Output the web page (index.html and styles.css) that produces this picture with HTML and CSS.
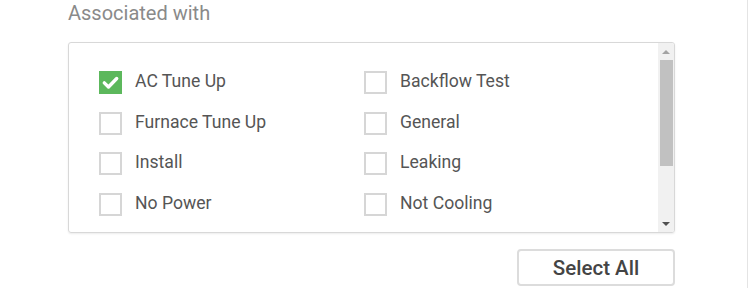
FILE: index.html
```html
<!DOCTYPE html>
<html>
<head>
<meta charset="utf-8">
<link rel="stylesheet" href="styles.css">
</head>
<body>
<div class="page">
  <div class="panel">
    <div class="label">Associated with</div>
    <div class="box">
      <div class="list">
        <label class="item"><span class="cb checked"><svg viewBox="0 0 23 23" width="23" height="23"><path d="M5.3 11.9 L9.5 16 L17.7 7.5" fill="none" stroke="#fff" stroke-width="3.4" stroke-linecap="round" stroke-linejoin="round"/></svg></span><span class="txt">AC Tune Up</span></label>
        <label class="item"><span class="cb"></span><span class="txt">Backflow Test</span></label>
        <label class="item"><span class="cb"></span><span class="txt">Furnace Tune Up</span></label>
        <label class="item"><span class="cb"></span><span class="txt">General</span></label>
        <label class="item"><span class="cb"></span><span class="txt">Install</span></label>
        <label class="item"><span class="cb"></span><span class="txt">Leaking</span></label>
        <label class="item"><span class="cb"></span><span class="txt">No Power</span></label>
        <label class="item"><span class="cb"></span><span class="txt">Not Cooling</span></label>
      </div>
      <div class="scrollbar">
        <div class="arrow up"></div>
        <div class="thumb"></div>
        <div class="track"></div>
        <div class="arrow down"></div>
      </div>
    </div>
    <div class="actions">
      <button class="btn">Select All</button>
    </div>
  </div>
</div>
</body>
</html>
```
FILE: styles.css
```css
html, body {
  margin: 0;
  padding: 0;
  background: #fff;
}
body {
  font-family: Roboto, "Liberation Sans", sans-serif;
}
.page {
  width: 747px;
  height: 288px;
  border-right: 1px solid #e4e4e4;
  overflow: hidden;
}
.panel {
  width: 607px;
  padding: 2px 0 0 68px;
}
.label {
  font-size: 20px;
  line-height: 22px;
  color: #8a8a8a;
  margin-bottom: 18px;
}
.box {
  box-sizing: border-box;
  height: 191px;
  border: 1px solid #d8d8d8;
  border-radius: 3px;
  box-shadow: 0 1px 2px rgba(0,0,0,0.08);
  display: flex;
  overflow: hidden;
}
.list {
  flex: 1;
  padding: 28px 0 0 30px;
  display: grid;
  grid-template-columns: 265px 265px;
  grid-auto-rows: 40.67px;
  align-content: start;
  overflow: hidden;
}
.item {
  display: flex;
  align-items: flex-start;
}
.cb {
  box-sizing: border-box;
  width: 23px;
  height: 23px;
  border: 2px solid #d6d6d6;
  background: #fff;
  flex: none;
  display: block;
}
.cb.checked {
  border: none;
  background: #5cb85c;
}
.cb svg {
  display: block;
}
.txt {
  margin-left: 13px;
  font-size: 17.6px;
  line-height: 20px;
  color: #555;
}
.scrollbar {
  width: 16px;
  flex: none;
  background: #f1f1f1;
  display: flex;
  flex-direction: column;
}
.arrow {
  height: 17px;
  flex: none;
  display: flex;
  align-items: center;
  justify-content: center;
}
.arrow::before {
  content: "";
  width: 0;
  height: 0;
  border-left: 4px solid transparent;
  border-right: 4px solid transparent;
}
.arrow.up::before {
  border-bottom: 4px solid #a3a3a3;
}
.arrow.down::before {
  border-top: 4px solid #505050;
}
.thumb {
  height: 106px;
  margin: 0 1px 0 2px;
  background: #c1c1c1;
  flex: none;
}
.track {
  flex: 1;
}
.actions {
  display: flex;
  justify-content: flex-end;
  margin-top: 16px;
}
.btn {
  box-sizing: border-box;
  width: 158px;
  height: 37px;
  border: 2px solid #dcdcdc;
  border-radius: 4px;
  background: #fff;
  font-family: Roboto, "Liberation Sans", sans-serif;
  font-size: 20.5px;
  font-weight: 500;
  color: #444;
  padding: 0;
}
```
